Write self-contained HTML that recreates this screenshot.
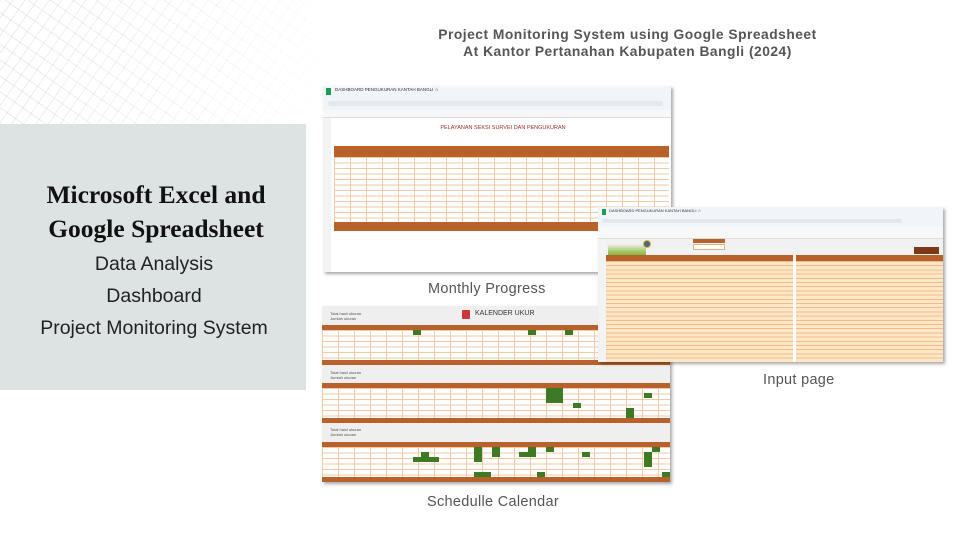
<!DOCTYPE html>
<html><head><meta charset="utf-8"><style>
*{margin:0;padding:0;box-sizing:border-box}
body{width:960px;height:540px;position:relative;overflow:hidden;background:#fff;font-family:"Liberation Sans",sans-serif}
.abs{position:absolute}
.map{left:0;top:0;width:420px;height:140px;
background:
repeating-linear-gradient(35deg,rgba(160,160,160,.22) 0 1px,transparent 1px 13px),
repeating-linear-gradient(125deg,rgba(160,160,160,.2) 0 1px,transparent 1px 10px);
-webkit-mask-image:linear-gradient(100deg,#000 0%,rgba(0,0,0,.5) 45%,transparent 80%);}
.panel{left:0;top:124px;width:306px;height:266px;background:#dde2e3}
.h1{left:0;width:312px;text-align:center;font-family:"Liberation Serif",serif;font-weight:bold;font-size:25.5px;color:#111}
.sub{left:0;width:308px;text-align:center;font-size:19.5px;color:#222}
.title{left:400px;width:455px;text-align:center;font-weight:bold;font-size:13.8px;color:#555;letter-spacing:.5px;line-height:17px}
.cap{font-size:14.5px;color:#555;letter-spacing:.3px}
.win{background:#fff;box-shadow:2px 2px 3px rgba(0,0,0,.35);overflow:hidden}
.tb{background:#f1f4f9}
.or{background:#b8612a}
.grid{background-image:repeating-linear-gradient(180deg,#f0c9a8 0 1px,transparent 1px 5.5px),repeating-linear-gradient(90deg,#f0c9a8 0 1px,transparent 1px 16px)}
.g{background:#3e7a23;position:absolute}
.cream{background-color:#fde7c4;background-image:repeating-linear-gradient(180deg,#f2b98e 0 1px,transparent 1px 4.2px)}
</style></head><body>
<div class="abs map"></div>
<div class="abs panel"></div>
<div class="abs h1" style="top:180px">Microsoft Excel and</div>
<div class="abs h1" style="top:214px">Google Spreadsheet</div>
<div class="abs sub" style="top:253px">Data Analysis</div>
<div class="abs sub" style="top:285px">Dashboard</div>
<div class="abs sub" style="top:317px">Project Monitoring System</div>

<div class="abs title" style="top:26px">Project Monitoring System using Google Spreadsheet<br>At Kantor Pertanahan Kabupaten Bangli (2024)</div>

<!-- Sheet 1 -->
<div class="abs win" style="left:323px;top:86px;width:348px;height:186px">
 <div class="abs tb" style="left:0;top:0;width:348px;height:24px"></div>
 <div class="abs" style="left:3px;top:2px;width:5px;height:7px;background:#1e9e52"></div>
 <div class="abs" style="left:12px;top:1px;font-size:4.5px;color:#333">DASHBOARD PENGUKURAN KANTAH BANGLI ☆</div>
 <div class="abs" style="left:5px;top:15px;width:335px;height:5px;background:#e3e8ef;border-radius:3px"></div>
 <div class="abs" style="left:0;top:24px;width:348px;height:8px;border-bottom:1px solid #ddd;background:#f8f8f8"></div>
 <div class="abs" style="left:0;top:32px;width:8px;height:154px;background:#f3f3f3"></div>
 <div class="abs" style="left:60px;top:39px;font-size:5.5px;color:#a0312a;width:240px;text-align:center">PELAYANAN SEKSI SURVEI DAN PENGUKURAN</div>
 <div class="abs or" style="left:11px;top:60px;width:335px;height:11px"></div>
 <div class="abs grid" style="left:11px;top:71px;width:335px;height:66px;background-color:#fff"></div>
 <div class="abs or" style="left:11px;top:136px;width:335px;height:9px"></div>
</div>
<div class="abs cap" style="left:428px;top:281px">Monthly Progress</div>

<!-- Calendar -->
<div class="abs win" style="left:322px;top:306px;width:348px;height:176px;background:#efefef">
 <div class="abs" style="left:8px;top:5px;font-size:4px;color:#555">Total hasil ukuran<br>Jumlah ukuran</div>
 <div class="abs" style="left:140px;top:4px;width:8px;height:9px;background:#c8383a;border-radius:1px"></div>
 <div class="abs" style="left:153px;top:4px;font-size:7px;color:#333">KALENDER UKUR</div>
 <div class="abs or" style="left:0;top:19px;width:348px;height:5px"></div>
 <div class="abs grid" style="left:0;top:24px;width:348px;height:30px;background-color:#fff"></div>
 <div class="abs or" style="left:0;top:54px;width:348px;height:5px"></div>
 <div class="abs" style="left:8px;top:64px;font-size:4px;color:#555">Total hasil ukuran<br>Jumlah ukuran</div>
 <div class="abs or" style="left:0;top:77px;width:348px;height:5px"></div>
 <div class="abs grid" style="left:0;top:82px;width:348px;height:30px;background-color:#fff"></div>
 <div class="abs or" style="left:0;top:112px;width:348px;height:5px"></div>
 <div class="abs" style="left:8px;top:121px;font-size:4px;color:#555">Total hasil ukuran<br>Jumlah ukuran</div>
 <div class="abs or" style="left:0;top:136px;width:348px;height:5px"></div>
 <div class="abs grid" style="left:0;top:141px;width:348px;height:30px;background-color:#fff"></div>
 <div class="abs or" style="left:0;top:171px;width:348px;height:5px"></div>
 <div class="g" style="left:91px;top:24px;width:8px;height:5px"></div>
 <div class="g" style="left:206px;top:24px;width:8px;height:5px"></div>
 <div class="g" style="left:243px;top:24px;width:8px;height:5px"></div>
 <div class="g" style="left:224px;top:82px;width:17px;height:15px"></div>
 <div class="g" style="left:322px;top:87px;width:8px;height:5px"></div>
 <div class="g" style="left:251px;top:97px;width:8px;height:5px"></div>
 <div class="g" style="left:304px;top:102px;width:8px;height:10px"></div>
 <div class="g" style="left:91px;top:151px;width:26px;height:5px"></div>
 <div class="g" style="left:99px;top:146px;width:8px;height:5px"></div>
 <div class="g" style="left:152px;top:141px;width:8px;height:15px"></div>
 <div class="g" style="left:170px;top:141px;width:8px;height:10px"></div>
 <div class="g" style="left:206px;top:141px;width:8px;height:10px"></div>
 <div class="g" style="left:197px;top:146px;width:17px;height:5px"></div>
 <div class="g" style="left:224px;top:141px;width:8px;height:5px"></div>
 <div class="g" style="left:260px;top:146px;width:8px;height:5px"></div>
 <div class="g" style="left:322px;top:146px;width:8px;height:15px"></div>
 <div class="g" style="left:330px;top:141px;width:8px;height:5px"></div>
 <div class="g" style="left:152px;top:166px;width:17px;height:5px"></div>
 <div class="g" style="left:215px;top:166px;width:8px;height:5px"></div>
 <div class="g" style="left:340px;top:166px;width:8px;height:5px"></div>
</div>
<div class="abs cap" style="left:427px;top:494px">Schedulle Calendar</div>

<!-- Input page -->
<div class="abs win" style="left:598px;top:207px;width:345px;height:155px">
 <div class="abs tb" style="left:0;top:0;width:345px;height:20px"></div>
 <div class="abs" style="left:4px;top:2px;width:4px;height:6px;background:#1e9e52"></div>
 <div class="abs" style="left:11px;top:1px;font-size:4px;color:#333">DASHBOARD PENGUKURAN KANTAH BANGLI ☆</div>
 <div class="abs" style="left:4px;top:12px;width:300px;height:4px;background:#e3e8ef;border-radius:2px"></div>
 <div class="abs" style="left:0;top:20px;width:345px;height:12px;background:#f8f8f8;border-bottom:1px solid #ddd"></div>
 <div class="abs" style="left:0;top:32px;width:8px;height:123px;background:#f3f3f3"></div>
 <div class="abs" style="left:8px;top:32px;width:337px;height:23px;background:#f1f1f1"></div>
 <div class="abs" style="left:10px;top:37px;width:38px;height:18px;background:linear-gradient(180deg,#f1f1f1 0%,#9bc65a 45%,#4f8f25 100%)"></div>
 <div class="abs" style="left:45px;top:33px;width:8px;height:8px;border-radius:50%;background:#4a6a7a;border:1px solid #d9b04a"></div>
 <div class="abs or" style="left:95px;top:32px;width:32px;height:4px"></div>
 <div class="abs" style="left:95px;top:37px;width:32px;height:6px;border:1px solid #e0b08a;background:#fff"></div>
 <div class="abs" style="left:316px;top:40px;width:25px;height:7px;background:#7a3a1a"></div>
 <div class="abs or" style="left:8px;top:48px;width:187px;height:6px"></div>
 <div class="abs cream" style="left:8px;top:54px;width:187px;height:101px"></div>
 <div class="abs or" style="left:198px;top:48px;width:147px;height:6px"></div>
 <div class="abs cream" style="left:198px;top:54px;width:147px;height:101px"></div>
</div>
<div class="abs cap" style="left:763px;top:372px">Input page</div>
</body></html>
